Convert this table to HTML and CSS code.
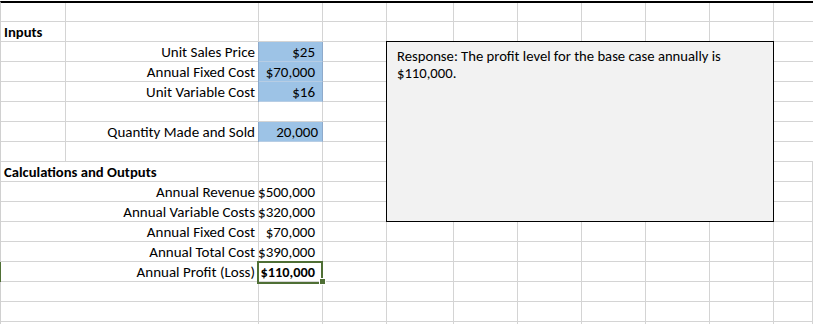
FILE: index.html
```html
<!DOCTYPE html>
<html>
<head>
<meta charset="utf-8">
<link rel="stylesheet" href="styles.css">
</head>
<body>
<div class="sheet">
  <!-- row 1 -->
  <div class="c r1"></div><div class="c r1"></div><div class="c r1"></div><div class="c r1"></div><div class="c r1"></div><div class="c r1"></div><div class="c r1"></div><div class="c r1"></div><div class="c r1"></div><div class="c r1"></div><div class="c r1"></div>
  <!-- row 2 -->
  <div class="c head">Inputs</div><div class="c"></div><div class="c"></div><div class="c"></div><div class="c"></div><div class="c"></div><div class="c"></div><div class="c"></div><div class="c"></div><div class="c"></div><div class="c"></div>
  <!-- row 3 -->
  <div class="c"></div><div class="c label">Unit Sales Price</div><div class="c val input">$25</div><div class="c"></div><div class="c"></div><div class="c"></div><div class="c"></div><div class="c"></div><div class="c"></div><div class="c"></div><div class="c"></div>
  <!-- row 4 -->
  <div class="c"></div><div class="c label">Annual Fixed Cost</div><div class="c val input">$70,000</div><div class="c"></div><div class="c"></div><div class="c"></div><div class="c"></div><div class="c"></div><div class="c"></div><div class="c"></div><div class="c"></div>
  <!-- row 5 -->
  <div class="c"></div><div class="c label">Unit Variable Cost</div><div class="c val input">$16</div><div class="c"></div><div class="c"></div><div class="c"></div><div class="c"></div><div class="c"></div><div class="c"></div><div class="c"></div><div class="c"></div>
  <!-- row 6 -->
  <div class="c"></div><div class="c"></div><div class="c"></div><div class="c"></div><div class="c"></div><div class="c"></div><div class="c"></div><div class="c"></div><div class="c"></div><div class="c"></div><div class="c"></div>
  <!-- row 7 -->
  <div class="c"></div><div class="c label">Quantity Made and Sold</div><div class="c num input">20,000</div><div class="c"></div><div class="c"></div><div class="c"></div><div class="c"></div><div class="c"></div><div class="c"></div><div class="c"></div><div class="c"></div>
  <!-- row 8 -->
  <div class="c"></div><div class="c"></div><div class="c"></div><div class="c"></div><div class="c"></div><div class="c"></div><div class="c"></div><div class="c"></div><div class="c"></div><div class="c"></div><div class="c"></div>
  <!-- row 9 -->
  <div class="c head span2">Calculations and Outputs</div><div class="c"></div><div class="c"></div><div class="c"></div><div class="c"></div><div class="c"></div><div class="c"></div><div class="c"></div><div class="c"></div><div class="c"></div>
  <!-- row 10 -->
  <div class="c"></div><div class="c label">Annual Revenue</div><div class="c val">$500,000</div><div class="c"></div><div class="c"></div><div class="c"></div><div class="c"></div><div class="c"></div><div class="c"></div><div class="c"></div><div class="c"></div>
  <!-- row 11 -->
  <div class="c"></div><div class="c label">Annual Variable Costs</div><div class="c val">$320,000</div><div class="c"></div><div class="c"></div><div class="c"></div><div class="c"></div><div class="c"></div><div class="c"></div><div class="c"></div><div class="c"></div>
  <!-- row 12 -->
  <div class="c"></div><div class="c label">Annual Fixed Cost</div><div class="c val">$70,000</div><div class="c"></div><div class="c"></div><div class="c"></div><div class="c"></div><div class="c"></div><div class="c"></div><div class="c"></div><div class="c"></div>
  <!-- row 13 -->
  <div class="c"></div><div class="c label">Annual Total Cost</div><div class="c val">$390,000</div><div class="c"></div><div class="c"></div><div class="c"></div><div class="c"></div><div class="c"></div><div class="c"></div><div class="c"></div><div class="c"></div>
  <!-- row 14 -->
  <div class="c rowsel"></div><div class="c label">Annual Profit (Loss)</div><div class="c val bold sel">$110,000</div><div class="c"></div><div class="c"></div><div class="c"></div><div class="c"></div><div class="c"></div><div class="c"></div><div class="c"></div><div class="c"></div>
  <!-- row 15 -->
  <div class="c"></div><div class="c"></div><div class="c"></div><div class="c"></div><div class="c"></div><div class="c"></div><div class="c"></div><div class="c"></div><div class="c"></div><div class="c"></div><div class="c"></div>
  <!-- row 16 -->
  <div class="c"></div><div class="c"></div><div class="c"></div><div class="c"></div><div class="c"></div><div class="c"></div><div class="c"></div><div class="c"></div><div class="c"></div><div class="c"></div><div class="c"></div>
  <!-- row 17 (partly visible) -->
  <div class="c last"></div><div class="c last"></div><div class="c last"></div><div class="c last"></div><div class="c last"></div><div class="c last"></div><div class="c last"></div><div class="c last"></div><div class="c last"></div><div class="c last"></div><div class="c last"></div>

  <div class="textbox">Response: The profit level for the base case annually is $110,000.</div>
</div>
</body>
</html>
```

FILE: styles.css
```css
html, body {
  margin: 0;
  padding: 0;
  background: #ffffff;
  overflow: hidden;
}

body {
  padding-top: 1px;
  font-family: "Carlito", "Lato", "Liberation Sans", sans-serif;
  font-size: 15px;
  color: #000;
}

.sheet {
  position: relative;
  display: grid;
  grid-template-columns: 65px 193px 64px 64px 67px 64px 64px 64px 64px 64px 39px;
  grid-template-rows: 19px repeat(15, 20px) 2px;
  border-top: 2px solid #000;
  border-left: 1px solid #d0d0d0;
  width: max-content;
}

.c {
  box-sizing: border-box;
  border-right: 1px solid #d4d4d4;
  border-bottom: 1px solid #d4d4d4;
  display: flex;
  align-items: flex-end;
  line-height: 17px;
  white-space: nowrap;
  padding-bottom: 0;
  min-width: 0;
}

.c:nth-child(11n) {
  border-right: none;
}

.last {
  border-bottom: none;
}

.head {
  font-weight: bold;
  font-size: 14.67px;
  padding-left: 3px;
}

.span2 {
  grid-column: span 2;
}

.label {
  justify-content: flex-end;
  padding-right: 3px;
}

.val {
  justify-content: flex-end;
  padding-right: 7px;
}

.num {
  justify-content: flex-end;
  padding-right: 4px;
}

.input {
  background: #9dc3e6;
  border-right-color: #8eaacb;
  border-bottom-color: #b7cde4;
  box-shadow: -1px 0 0 #8eaacb;
}

.bold {
  font-weight: bold;
  font-size: 14.3px;
}

.sel {
  position: relative;
}

.sel::after {
  content: "";
  position: absolute;
  left: -2px;
  top: -1px;
  width: 66px;
  height: 23px;
  box-sizing: border-box;
  border: 2px solid #4f6f35;
}

.sel::before {
  content: "";
  position: absolute;
  left: 60px;
  top: 16px;
  width: 5px;
  height: 5px;
  background: #4f6f35;
  border: 1px solid #fff;
  z-index: 2;
}

.rowsel {
  box-shadow: -1px 0 0 #4f6f35;
}

.textbox {
  position: absolute;
  left: 385px;
  top: 38px;
  width: 388px;
  height: 181px;
  box-sizing: border-box;
  border: 1px solid #000;
  background: #f2f2f2;
  padding: 6px 10px 0 10px;
  font-size: 14.67px;
  line-height: 17px;
  white-space: normal;
}
```
